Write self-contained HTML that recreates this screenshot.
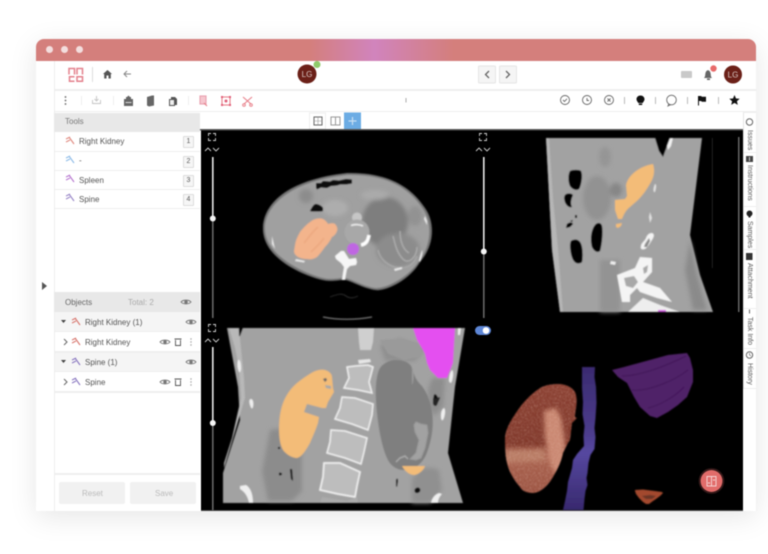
<!DOCTYPE html>
<html><head><meta charset="utf-8">
<style>
html,body{margin:0;padding:0;width:768px;height:554px;overflow:hidden;background:#fff}
body{font-family:"Liberation Sans",sans-serif;position:relative}
#p{position:absolute;left:0;top:0;width:768px;height:554px;filter:blur(.55px)}
.a{position:absolute}
.t{position:absolute;white-space:nowrap;font-size:8px;color:#555;line-height:10px}
.k{position:absolute;left:183px;width:9px;height:10px;border:1px solid #ddd;background:#f6f6f6;font-size:7px;line-height:10px;text-align:center;color:#555;border-radius:1px}
.l{position:absolute;height:1px;background:#eee}
.v{position:absolute;font-size:7px;color:#555;transform:rotate(90deg);transform-origin:0 0;white-space:nowrap;line-height:8px}
</style></head><body><div id="p">
<div class="a" style="left:36px;top:39px;width:720px;height:472px;background:#fff;border-radius:8px 8px 0 0;box-shadow:0 6px 28px rgba(0,0,0,.1)"></div>
<div class="a" style="left:36px;top:39px;width:720px;height:22px;border-radius:8px 8px 0 0;background:linear-gradient(90deg,#d47f7c 0%,#d47f7c 38%,#d184bd 47%,#d47f7c 58%,#d47f7c 100%)"></div>
<div class="a" style="left:46px;top:46px;width:7px;height:7px;border-radius:50%;background:#f3dede"></div>
<div class="a" style="left:61px;top:46px;width:7px;height:7px;border-radius:50%;background:#f3dede"></div>
<div class="a" style="left:76px;top:46px;width:7px;height:7px;border-radius:50%;background:#f3dede"></div>
<div class="a" style="left:54px;top:61px;width:1px;height:450px;background:#eee"></div>
<div class="l" style="left:54px;top:89px;width:702px;height:2px"></div>
<div class="l" style="left:54px;top:111px;width:702px"></div>

<svg class="a" style="left:0;top:0" width="768" height="130" viewBox="0 0 768 130">
 <g fill="none" stroke="#e4808c" stroke-width="1.500">
  <path d="M69 74.500V68.500h5.500v6M77 74.500V68.500h5.500v6M74.500 76.800H69.500v4.500h5M77 76.800h5.500v4.500H77z"/>
 </g>
 <rect x="92" y="67" width="1" height="15" fill="#ddd"/>
 <path d="M103 74l4.500-4 4.500 4h-1.200v4.500h-2.300v-3h-2v3h-2.300V74z" fill="#555"/>
 <path d="M131 74h-7m3-3l-3 3 3 3" fill="none" stroke="#888" stroke-width="1"/>
 <circle cx="307" cy="74" r="9.500" fill="#6b2018"/>
 <text x="307" y="77" font-size="8" fill="#d8c8c4" text-anchor="middle" font-family="Liberation Sans">LG</text>
 <circle cx="317" cy="64.500" r="3.500" fill="#8fca6a"/>
 <rect x="478.500" y="66" width="17" height="17" rx="1" fill="#f5f5f5" stroke="#e5e5e5"/>
 <rect x="499.500" y="66" width="17" height="17" rx="1" fill="#f5f5f5" stroke="#e5e5e5"/>
 <path d="M489 71l-3.500 3.500 3.500 3.500M506 71l3.500 3.500-3.500 3.500" fill="none" stroke="#666" stroke-width="1.300"/>
 <rect x="681" y="71" width="11" height="7" rx="1" fill="#c9c9c9"/>
 <path d="M704 78c1.500-1.500 1-3 1.500-5 .3-1.800 1.500-2.800 2.500-2.800s2.200 1 2.500 2.800c.5 2 0 3.500 1.500 5z" fill="#666"/>
 <rect x="707" y="78.500" width="3" height="1.500" fill="#666"/>
 <circle cx="713.500" cy="68.500" r="3.200" fill="#e86a6a"/>
 <circle cx="733" cy="74.500" r="9" fill="#6b2018"/>
 <text x="733" y="77.500" font-size="8" fill="#d8c8c4" text-anchor="middle" font-family="Liberation Sans">LG</text>

 <g fill="#666"><circle cx="65.500" cy="97" r=".9"/><circle cx="65.500" cy="100.500" r=".9"/><circle cx="65.500" cy="104" r=".9"/></g>
 <g fill="#eee"><rect x="81" y="96" width="1" height="9"/><rect x="113" y="96" width="1" height="9"/><rect x="188" y="96" width="1" height="9"/></g>
 <path d="M92.500 100v3.500h8V100M96.500 96v5m-2-2 2 2 2-2" fill="none" stroke="#c4c4c4" stroke-width=".9"/>
 <path d="M124 99h9v7h-9zM126 99v-2h1l1.500-1.500L130 97h1v2" fill="#666"/>
 <rect x="125.500" y="102" width="6" height="1" fill="#ddd"/>
 <path d="M147 97l5-1.500h2v10l-5 1-2-1z" fill="#666"/>
 <path d="M171 97h4l2 2v6h-2v1h-6v-7h2z" fill="#555"/><path d="M170 100h4v5h-4z" fill="#eee"/>
 <g fill="none" stroke="#e8808a" stroke-width="1.100">
  <rect x="200" y="96" width="6" height="8" fill="#f6c7cf" stroke="#e8a0b0"/>
  <path d="M204 103l3 3"/>
  <rect x="222" y="97" width="8" height="8"/>
 </g>
 <g fill="#e0607a"><rect x="221" y="96" width="2" height="2"/><rect x="229" y="96" width="2" height="2"/><rect x="221" y="104" width="2" height="2"/><rect x="229" y="104" width="2" height="2"/><circle cx="226" cy="101" r="1.500"/></g>
 <path d="M243 97l8 7M252 97l-8 7" stroke="#e8808a" stroke-width="1.100"/>
 <circle cx="244" cy="105" r="1.300" fill="none" stroke="#e8808a"/><circle cx="251" cy="105" r="1.300" fill="none" stroke="#e8808a"/>
 <rect x="405.500" y="98" width="1" height="4.500" fill="#aaa"/>

 <g fill="none" stroke="#666" stroke-width=".9">
  <circle cx="565" cy="100" r="4.500"/><path d="M563 100l1.500 1.500 2.500-2.700"/>
  <circle cx="587" cy="100" r="4.500"/><path d="M587 98v2.500h2"/>
  <circle cx="609" cy="100" r="4.500"/><path d="M607.500 98.500l3 3m0-3l-3 3"/>
  <circle cx="671.500" cy="100" r="4.800"/><path d="M669 103.500l-1 2.500 3-1.500"/>
 </g>
 <g fill="#bbb"><rect x="624" y="97" width="1" height="7"/><rect x="655" y="97" width="1" height="7"/><rect x="687" y="97" width="1" height="7"/><rect x="718" y="97" width="1" height="7"/></g>
 <path d="M640.500 95.500c2.300 0 4 1.700 4 3.700 0 1.600-1.200 2.400-1.800 3.800h-4.400c-.6-1.400-1.800-2.200-1.800-3.800 0-2 1.700-3.700 4-3.700z" fill="#111"/><rect x="638.800" y="103.500" width="3.400" height="1.500" fill="#111"/>
 <path d="M698 96v9.500h1V101h2l1 .8h4v-5h-4l-1-.8z" fill="#111"/>
 <path d="M734.500 95l1.500 3.500 3.700.3-2.800 2.400.9 3.700-3.300-2-3.300 2 .9-3.700-2.800-2.400 3.700-.3z" fill="#111"/>

 <rect x="309.500" y="113" width="16" height="16" fill="#fff" stroke="#eee"/>
 <rect x="314" y="117" width="8" height="8" fill="none" stroke="#666"/><path d="M314 121h8M318 117v8" stroke="#999" stroke-width=".6"/>
 <rect x="331" y="117" width="9" height="8" fill="none" stroke="#999"/><path d="M335.500 117v8" stroke="#999"/>
 <rect x="344" y="112.500" width="17" height="17" fill="#6cace4"/>
 <path d="M352.500 117v8M348.500 121h8" stroke="#c8dff2" stroke-width="1.200"/>
</svg>

<!-- left panel -->
<div class="a" style="left:54px;top:113px;width:146px;height:19px;background:#e8e8e8"></div>
<div class="t" style="left:65px;top:117px;color:#777">Tools</div>
<div class="l" style="left:55px;top:151px;width:145px"></div>
<div class="l" style="left:55px;top:170px;width:145px"></div>
<div class="l" style="left:55px;top:189px;width:145px"></div>
<div class="l" style="left:55px;top:208px;width:145px"></div>
<div class="t" style="left:79px;top:136.500px">Right Kidney</div>
<div class="t" style="left:79px;top:155.500px">-</div>
<div class="t" style="left:79px;top:175.500px">Spleen</div>
<div class="t" style="left:79px;top:194.500px">Spine</div>
<div class="k" style="top:136px">1</div>
<div class="k" style="top:156px">2</div>
<div class="k" style="top:175px">3</div>
<div class="k" style="top:194px">4</div>

<div class="a" style="left:54px;top:292px;width:146px;height:20px;background:#e8e8e8"></div>
<div class="t" style="left:65px;top:297.500px;color:#666">Objects</div>
<div class="t" style="left:128px;top:297.500px;color:#aaa">Total: 2</div>
<div class="a" style="left:55px;top:312px;width:145px;height:19px;background:#f5f5f5"></div>
<div class="a" style="left:55px;top:352px;width:145px;height:19px;background:#f5f5f5"></div>
<div class="l" style="left:55px;top:331px;width:145px"></div>
<div class="l" style="left:55px;top:351px;width:145px;height:2px"></div>
<div class="l" style="left:55px;top:371px;width:145px"></div>
<div class="l" style="left:55px;top:391px;width:145px;height:2px"></div>
<div class="t" style="left:85px;top:317.500px">Right Kidney (1)</div>
<div class="t" style="left:85px;top:337.500px">Right Kidney</div>
<div class="t" style="left:85px;top:357.500px">Spine (1)</div>
<div class="t" style="left:85px;top:377.500px">Spine</div>

<div class="l" style="left:55px;top:473px;width:145px;height:2px"></div>
<div class="a" style="left:59px;top:482px;width:66px;height:22px;background:#f1f1f1;border-radius:2px"></div>
<div class="a" style="left:130px;top:482px;width:66px;height:22px;background:#f1f1f1;border-radius:2px"></div>
<div class="t" style="left:82px;top:488.500px;color:#bbb">Reset</div>
<div class="t" style="left:155px;top:488.500px;color:#bbb">Save</div>

<svg class="a" style="left:0;top:0" width="210" height="400" viewBox="0 0 210 400">
 <path d="M42 282l5 4-5 4z" fill="#555"/>
 <g fill="none" stroke-width="1.100">
  <path d="M66 139l4-2m-1 0l5 7M66 142l4-2" stroke="#e08a80"/>
  <path d="M66 158l4-2m-1 0l5 7M66 161l4-2" stroke="#8fbce8"/>
  <path d="M66 177l4-2m-1 0l5 7M66 180l4-2" stroke="#b878d0"/>
  <path d="M66 196l4-2m-1 0l5 7M66 199l4-2" stroke="#9a88c8"/>
  <path d="M72 320l4-2m-1 0l5 7M72 323l4-2" stroke="#d87870"/>
  <path d="M72 340l4-2m-1 0l5 7M72 343l4-2" stroke="#d87870"/>
  <path d="M72 360l4-2m-1 0l5 7M72 363l4-2" stroke="#8a78c0"/>
  <path d="M72 380l4-2m-1 0l5 7M72 383l4-2" stroke="#8a78c0"/>
 </g>
 <path d="M61 320h5l-2.500 3zM61 360h5l-2.500 3z" fill="#444"/>
 <path d="M64 339l3 3-3 3M64 379l3 3-3 3" fill="none" stroke="#666"/>
 <g fill="none" stroke="#777" stroke-width=".9">
  <path d="M181 302c2-2.500 8-2.500 10 0-2 2.500-8 2.500-10 0z"/><circle cx="186" cy="302" r="1.300" fill="#777"/>
  <path d="M186 322c2-2.500 8-2.500 10 0-2 2.500-8 2.500-10 0z"/><circle cx="191" cy="322" r="1.300" fill="#777"/>
  <path d="M186 362c2-2.500 8-2.500 10 0-2 2.500-8 2.500-10 0z"/><circle cx="191" cy="362" r="1.300" fill="#777"/>
  <path d="M160 342c2-2.500 8-2.500 10 0-2 2.500-8 2.500-10 0z"/><circle cx="165" cy="342" r="1.300" fill="#777"/>
  <path d="M160 382c2-2.500 8-2.500 10 0-2 2.500-8 2.500-10 0z"/><circle cx="165" cy="382" r="1.300" fill="#777"/>
  <path d="M174.500 339h7M175.500 340v5.500h5V340M174.500 379h7M175.500 380v5.500h5V380" stroke="#555"/>
 </g>
 <g fill="#999"><circle cx="191" cy="339" r=".7"/><circle cx="191" cy="342" r=".7"/><circle cx="191" cy="345" r=".7"/><circle cx="191" cy="379" r=".7"/><circle cx="191" cy="382" r=".7"/><circle cx="191" cy="385" r=".7"/></g>
</svg>

<!-- viewer -->
<svg class="a" style="left:0;top:0" width="768" height="554" viewBox="0 0 768 554">
 <defs>
  <filter id="b"><feGaussianBlur stdDeviation=".5"/></filter>
  <filter id="s" x="-30%" y="-30%" width="160%" height="160%"><feGaussianBlur stdDeviation="2"/></filter>
  <filter id="n" x="0" y="0" width="100%" height="100%"><feTurbulence type="fractalNoise" baseFrequency=".7" numOctaves="2" seed="4"/><feColorMatrix values="0 0 0 0 .95 0 0 0 0 .72 0 0 0 0 .62 2.500 0 0 0 -1.100"/><feComposite in2="SourceGraphic" operator="in"/></filter>
  <linearGradient id="kg" x1="0" y1="0" x2="0" y2="1"><stop offset="0" stop-color="#8a3e30"/><stop offset=".55" stop-color="#7f3628"/><stop offset=".66" stop-color="#a8604c"/><stop offset="1" stop-color="#9a5140"/></linearGradient>
  <linearGradient id="sg" x1="0" y1="0" x2="0" y2="1"><stop offset="0" stop-color="#3a2b70"/><stop offset=".45" stop-color="#4c3c8c"/><stop offset=".6" stop-color="#5648a0"/><stop offset="1" stop-color="#38296e"/></linearGradient>
  <clipPath id="kc"><path d="M558 384C566 384 575 388 576 395C578 403 575 411 575 417L577 418 572 423 571 432 570 440 568 443 563 453C561 463 557 470 553 477C548 486 540 493 533 493C527 493 522 491 520 487C514 480 509 472 507 463C505 455 505 445 505 437C506 427 513 417 520 407C527 398 534 392 540 388C545 385 552 384 558 384Z"/></clipPath>
 </defs>
 <rect x="201" y="130" width="542" height="381" fill="#000"/>
 <rect x="200" y="129" width="543" height="1.500" fill="#555"/>
 <rect x="201" y="510" width="542" height="1" fill="#444"/>

 <!-- axial -->
 <g filter="url(#b)">
  <path d="M263 227C264 205 285 180 347 173C385 172 410 185 425 208C435 222 435 245 420 262C410 280 385 292 375 290C362 288 352 281 345 280C335 280 330 283 315 278C285 268 262 250 263 227Z" fill="#757575"/>
  <path d="M265 227C266 207 287 182 347 175C384 174 408 186 423 209C432 223 432 244 419 261C408 278 385 289 375 288C362 286 352 279 345 278C335 278 330 281 316 276C288 266 264 249 265 227Z" fill="#a0a0a0"/>
  <g filter="url(#s)">
   <ellipse cx="385" cy="222" rx="23" ry="25" fill="#7e7e7e"/>
   <ellipse cx="398" cy="250" rx="22" ry="17" fill="#8c8c8c"/>
   <ellipse cx="335" cy="208" rx="13" ry="8" fill="#adadad"/>
   <ellipse cx="306" cy="196" rx="7" ry="7" fill="#8c8c8c"/>
   <ellipse cx="415" cy="216" rx="7" ry="10" fill="#929292"/>
   <ellipse cx="375" cy="195" rx="14" ry="5" fill="#aaa"/>
  </g>
  <path d="M393 236c2 8 4 18 11 24 6 4 13-4 13-13M400 231c0 8 2 18 9 22" fill="none" stroke="#ababab" stroke-width="1.500"/>
  <path d="M378 250c2 9 10 17 22 18 8 0 14-4 17-12" fill="none" stroke="#a8a8a8" stroke-width="1.500"/>
  <circle cx="357" cy="217.500" r="5" fill="#c6c6c6"/>
  <circle cx="357" cy="232" r="12.500" fill="#a8a8a8"/>
  <path d="M351 225.500c4-1.500 9-1 12 .5" stroke="#eee" stroke-width="1.600" fill="none"/>
  <path d="M361 245c5-1 7-4 8-10" stroke="#fff" stroke-width="3.500" fill="none"/>
  <path d="M341 251l3 0 5 8 7-1 1 4-1 3-6 1-3 3-1 5-1 6-3 0 1-7 1-6-3-4-5-4-1-3z" fill="#f6f6f6"/>
  <path d="M316 183h5l2-2 7 .5 3-1.500 6 .5 7-1.500 6 .5v4l-6 1h-6l-3 1-6 .5-4 2-6-.5-4 2-1-2z" fill="#0a0a0a"/>
  <path d="M310 211c2-4 4-7 6-7 2 0 6 2 7 4v3l-3 .5h-8z" fill="#080808"/>
  <path d="M272 236l2 9 1 4-3-5zM422 250c1 4-1 9-2 12l-1-1c1-4 2-8 3-11z" fill="#f2f2f2"/>
  <path d="M296 259l9 2-1 1.500-9-1.500zM394 269l8-2v2l-7 2zM425 216l2 5v4l-3-6z" fill="#eaeaea"/>
  <path d="M295 245C296 239 298 236 300 232C304 227 308 223 313 220C317 218 321 218 323 219C325 220 327 222 328 224C331 223 334 223 335 224C337 226 338 229 337 231C336 234 334 236 332 237C330 241 328 244 325 247C322 251 320 254 317 257C314 259 310 260 307 259C303 259 300 258 298 257C295 255 294 253 294 251Z" fill="#f3b48c"/>
  <path d="M304 243c5-6 9-12 14-16M311 252c4-4 9-8 13-14" fill="none" stroke="#eeaa82" stroke-width="1.800"/>
  <circle cx="353" cy="249" r="6" fill="#bf66e2"/>
  <path d="M330 297c8-3 12-4 16-1 4 3 8 2 12 0" fill="none" stroke="#4a4a4a" stroke-width=".6"/>
  <path d="M323 317c15 3 32 3 49 0" fill="none" stroke="#999" stroke-width="1"/>
 </g>

 <!-- sagittal -->
 <g filter="url(#b)">
  <path d="M546 138H702L690 235 700 275 713 312H560L552 250Z" fill="#a2a2a2"/>
  <path d="M546 138h3l4 60 5 50 5 64h-3L552 250z" fill="#b6b6b6"/>
  <g filter="url(#s)">
   <ellipse cx="597" cy="198" rx="14" ry="22" fill="#929292"/>
   <ellipse cx="605" cy="157" rx="6" ry="10" fill="#959595"/>
   <ellipse cx="616" cy="190" rx="6" ry="7" fill="#868686"/>
   <path d="M690 240l7 35 10 35h-14l-8-40z" fill="#8a8a8a"/>
   <path d="M600 260l20 0 0 52h-20z" fill="#939393"/>
  </g>
  <path d="M655 138h15l-7 19-4-6z" fill="#000"/><path d="M670 138h3l-2 8-3 4-1-4z" fill="#f2f2f2"/>
  <path d="M570 171c3-1.500 9-1.500 11 0 2 5 0 15-2 18-3 2-7 0-9-3-2-5-2-11 0-15z" fill="#000"/>
  <path d="M565 195c2-2 6-2 8 0-2 4-3 9-1 12-3 1-6-2-7-5-1-3-1-5 0-7z" fill="#000"/>
  <path d="M567 224c3-2 5-2 6 0l-3 3-4 1zM575 215l2 0 0 3-2 0zM570 221l3-1-1 2z" fill="#000"/>
  <path d="M596 224c3-2 5-1 6 2 1 6 0 18-2 25-3 2-6 0-8-4-2-8-1-18 4-23z" fill="#000"/>
  <path d="M571 241c3-2 7-2 9 1 3 4 3 15 2 20-2 2-6 2-8-1-3-3-5-16-3-20z" fill="#000"/>
  <path d="M655 184c2 0 1 5 0 8-2 1-2-4 0-8zM650 212l2 6-2 5-1-6z" fill="#e2e2e2"/>
  <path d="M652 233c3 1 2 4 0 7-2 3-4 7-7 9-3 1-5 0-4-3 0-3 4-5 5-8 1-3 3-5 6-5z" fill="#f4f4f4"/>
  <path d="M649 238l-4 6-1 3 3 0 3-6z" fill="#8a8a8a"/>
  <path d="M617 275L635 268 640 257 652 258 652 272 643 282 660 288 672 302 657 298 640 292 637 288 630 295 630 302 622 302Z" fill="#f4f4f4"/>
  <path d="M628 312L643 298 660 305 680 312Z" fill="#eee"/>
  <path d="M624 278l10-2 4 6-5 6-7-2zM643 268l5-3-1 7-3 2z" fill="#a8a8a8"/>
  <path d="M611 261l5 1-1 3-5-1z" fill="#eee"/>
  <path d="M653 164C655 170 654 176 652 180C648 188 643 195 638 200L630 207C626 210 624 214 622 219L618 219 615 210 615 200 625 199 627 196 626 185C628 175 640 166 653 164Z" fill="#f3bc78"/>
  <path d="M616 224l6-1-1 3-3 2-2-1z" fill="#f3bc78"/>
  <rect x="658" y="310" width="8" height="2" fill="#d25ae0"/>
 </g>
 <rect x="738" y="137" width="1.500" height="175" fill="#666"/>
 <rect x="712" y="138" width=".6" height="130" fill="#333"/>

 <!-- coronal -->
 <g filter="url(#b)">
  <path d="M227 328H465L455 387 448 453 463 503H223V473L240 420 238 387Z" fill="#a2a2a2"/>
  <g filter="url(#s)">
   <path d="M270 430l26-4 6 20 0 45-10 10h-24l-6-30z" fill="#8c8c8c"/>
   <path d="M419 470c5-3 15-3 20 0l3 20-12 13h-18l0-24z" fill="#909090"/>
   <path d="M432 378l13 0-2 28-8 10-6-8-1-18z" fill="#8d8d8d"/>
   <path d="M380 345l20-6 25 10-10 12-30 0z" fill="#8f8f8f"/>
  </g>
  <path d="M229 328h9l2 10 4 40 1 20-12 40-9 30v-5l8-25 9-40-2-30-4-20z" fill="#b8b8b8"/>
  <path d="M239 328h4l-3 8-1 0z" fill="#050505"/>
  <path d="M358 328h16l-1 14-2 8-11 0-1-8z" fill="#cfcfcf"/>
  <path d="M380 340l24-1 14 4 4 8-2 6-16 3-16-6z" fill="#9a9a9a"/>
  <path d="M380 368C384 362 392 360 395 360C403 360 410 362 412 368C414 375 416 380 420 384C426 390 430 400 432 412C434 425 432 440 426 455C421 465 414 470 404 470C396 470 390 465 387 458C381 445 377 420 376 400C375 385 377 373 380 368Z" fill="#7f7f7f"/>
  <path d="M412 368c2 6 1 14 0 16M416 422l5 2 6 1 1 8-3 15-4 10-5 2-6-1 6-6 3-13-4-8-1-7z" fill="#a2a2a2" stroke="#9a9a9a" stroke-width="1"/>
  <path d="M396 462l4-4 5-2 3 3" fill="none" stroke="#aaa" stroke-width="1.500"/>
  <path d="M347 367L355 366 368 365 373 367 369 382 372 393 358 390 344 388 349 378Z" fill="#bdbdbd" stroke="#f0f0f0" stroke-width="1.500"/>
  <path d="M358 360l12-1 1 3-12 2z" fill="#e6e6e6"/>
  <path d="M342 397L355 398 373 404 372 415 368 430 352 424 335 419 340 408Z" fill="#bdbdbd" stroke="#f0f0f0" stroke-width="1.500"/>
  <path d="M331 430L345 431 367 438 364 452 361 464 345 458 327 453 330 442Z" fill="#bdbdbd" stroke="#f0f0f0" stroke-width="1.500"/>
  <path d="M324 463L340 463 360 472 357 486 355 497 338 494 320 490 323 477Z" fill="#bdbdbd" stroke="#f0f0f0" stroke-width="1.700"/>
  <path d="M320 503l2-6 25 4 10-4 1 6z" fill="#ababab"/>
  <path d="M238 360c2-1 3 3 3 8 0 3-1 5-2 4-2-4-2-9-1-12zM251 399c2 0 3 4 2 8-1 3-2 1-3-2-1-3-1-6 1-6zM240 486l6-1c5 3 7 10 7 18h-4c-1-6-4-11-9-14zM452 370c2 1 1 8 0 11-1 3-2 2-3 0 0-5 1-9 3-11zM444 408c2 1 1 9-1 12-2 1-2-2-2-5 0-3 1-6 3-7zM431 503c1-6 5-9 8-10l3 1c-3 3-4 6-4 9zM458 328h3l-1 7-2 0z" fill="#efefef"/>
  <path d="M434 395c1-2 3 0 4 3 0 3-1 6-2 8-2-3-3-8-2-11zM415 489c2-2 4-2 5 0 1 2-1 4-3 4-2 0-3-2-2-4zM396 480c1-2 2-2 2 1l-1 6-1-1zM290 469l2 0 1 12-2-2zM278 447h2v2h-2zM279 473c1-1 3 0 3 1s-2 2-3 1z" fill="#0a0a0a"/>
  <path d="M433 398c2 1 4 0 7-1 0 2-2 5-3 8-2 2-4 0-4-2z" fill="#222"/>
  <path d="M325 370C329 371 332 374 332 377L333 388 334 392 328 402 326 408 322 408 307 404 304 412 319 417 318 423C315 432 312 438 310 443C306 450 302 457 297 458C291 458 285 453 283 450C280 445 279 437 279 430C279 420 280 411 283 403C286 395 291 388 297 383C303 378 308 375 313 372C317 370 322 369 325 370Z" fill="#f3bc78"/>
  <path d="M323 379l3-1 1 2-2 2z" fill="#666"/>
  <path d="M325 385l6 1 0 3-5-1z" fill="#a8a8a8"/>
  <path d="M402 466H425C424 470 418 475 414 475C409 475 404 470 402 466Z" fill="#f3bc78"/>
  <path d="M413 328H455L454 345 453 363 447 378 438 378 430 370 427 363 425 354 423 350 417 340Z" fill="#e44ff0"/>
 </g>

 <!-- 3D -->
 <g filter="url(#b)">
  <g clip-path="url(#kc)">
   <rect x="500" y="380" width="80" height="115" fill="url(#kg)"/>
   <path d="M544 411l12-3 5 10 4 25-2 25-8 6-6-14-4-24z" fill="#c98670" filter="url(#s)"/>
   <path d="M505 450l40-1 0 12-40 2z" fill="#b87a64" filter="url(#s)"/>
   <rect x="500" y="380" width="80" height="115" fill="#fff" filter="url(#n)" opacity=".35"/>
  </g>
  <path d="M582 367h13l-.5 10 1.500 10 .5 16-1 15-1 10 1 9-1 12-4 6-2 8-1 10-1 5 1 7-2 6-1 8-1 11H563l2-9 2-10 1-9 2-7 2-7 1-8 4-6 7-8-.5-10 1-10-2-12 .5-12-1-14z" fill="url(#sg)"/>
  <path d="M612 370L624 367 646 361 668 355 687 353 690 358 693 370 693 382 687 397 678 405 668 412 657 418 650 416 640 407 634 397 627 383 618 377Z" fill="#4f2167"/>
  <path d="M622 376c18 0 44-10 64-20M632 390c15 2 42-9 56-20M648 408c10-2 27-11 36-21" stroke="#43195a" stroke-width="1" fill="none"/>
  <path d="M635 490l8-.5 12 1.500 7 1 1 1-3 3-4 3-3 2-4 3-3 0-3-2-4-4-3-4-1-3z" fill="#a34a2e"/>
  <path d="M642 496l8-1 6 1-4 3-6 0z" fill="#6a3428"/>
 </g>
 <circle cx="711.500" cy="481" r="11" fill="#e26c6a"/>
 <circle cx="711.500" cy="481" r="12" fill="none" stroke="#e26c6a" stroke-opacity=".25" stroke-width="1.500"/>
 <rect x="707" y="476.500" width="9" height="9.500" fill="none" stroke="#f7dcdc" stroke-width=".9"/>
 <path d="M711.500 476.500v9.500M713 480h2M708 483h2" stroke="#f7dcdc" stroke-width=".9"/>

 <!-- view controls -->
 <g fill="none" stroke="#cfcfcf" stroke-width=".9">
  <path d="M208.500 136v-2.500h2.500M213 133.500h2.500v2.500M215.500 138v2.500H213M211 140.500h-2.500V138"/>
  <path d="M479.500 136v-2.500h2.500M484 133.500h2.500v2.500M486.500 138v2.500H484M482 140.500h-2.500V138"/>
  <path d="M208.500 327v-2.500h2.500M213 324.500h2.500v2.500M215.500 329v2.500H213M211 331.500h-2.500V329"/>
  <path d="M205 151l3-3 3 3M213 148l3 3 3-3"/>
  <path d="M476 151l3-3 3 3M484 148l3 3 3-3"/>
  <path d="M205 342l3-3 3 3M213 339l3 3 3-3"/>
 </g>
 <rect x="212" y="157" width="1.600" height="61" fill="#e8e8e8"/><rect x="212" y="218" width="1.600" height="100" fill="#666"/>
 <circle cx="212.800" cy="218.500" r="3" fill="#f4f4f4"/>
 <rect x="483" y="157" width="1.600" height="95" fill="#e8e8e8"/><rect x="483" y="252" width="1.600" height="66" fill="#666"/>
 <circle cx="483.800" cy="251.500" r="3" fill="#f4f4f4"/>
 <rect x="212" y="347" width="1.600" height="76" fill="#e8e8e8"/><rect x="212" y="423" width="1.600" height="87" fill="#666"/>
 <circle cx="212.800" cy="423" r="3" fill="#f4f4f4"/>
 <rect x="475" y="326" width="16" height="9" rx="4.500" fill="#5d86d6"/>
 <circle cx="486" cy="330.500" r="3.300" fill="#fff"/>

 <!-- right tabs -->
 <rect x="743" y="112" width="13" height="399" fill="#fff"/>
 <rect x="743" y="112" width="1" height="277" fill="#e6e6e6"/>
 <rect x="743" y="112" width="13" height="1" fill="#eee"/>
 <g fill="#eee"><rect x="744" y="152" width="12" height="1"/><rect x="744" y="206" width="12" height="1"/><rect x="744" y="249" width="12" height="1"/><rect x="744" y="308" width="12" height="1"/><rect x="744" y="348" width="12" height="1"/><rect x="744" y="388" width="12" height="1"/></g>
 <circle cx="749.500" cy="122" r="3.200" fill="none" stroke="#666"/>
 <rect x="746" y="156" width="7" height="6" fill="#444"/><rect x="749" y="157" width="1" height="4" fill="#ccc"/>
 <circle cx="749.500" cy="213.500" r="3" fill="#222"/><rect x="748.500" y="216" width="2" height="1.500" fill="#222"/>
 <rect x="746" y="253" width="6.500" height="7" fill="#333"/>
 <rect x="749" y="309.500" width="1" height="4" fill="#666"/>
 <circle cx="749.500" cy="355" r="3.200" fill="none" stroke="#666"/><path d="M749.500 353v2l1.500 1" stroke="#666" fill="none" stroke-width=".7"/>
 <rect x="756" y="112" width="1" height="399" fill="#f2f2f2"/>
</svg>

<div class="v" style="top:130px;left:753px">Issues</div>
<div class="v" style="top:165px;left:753px">Instructions</div>
<div class="v" style="top:221px;left:753px">Samples</div>
<div class="v" style="top:263px;left:753px">Attachment</div>
<div class="v" style="top:317px;left:753px">Task Info</div>
<div class="v" style="top:363px;left:753px">History</div>
</div></body></html>
